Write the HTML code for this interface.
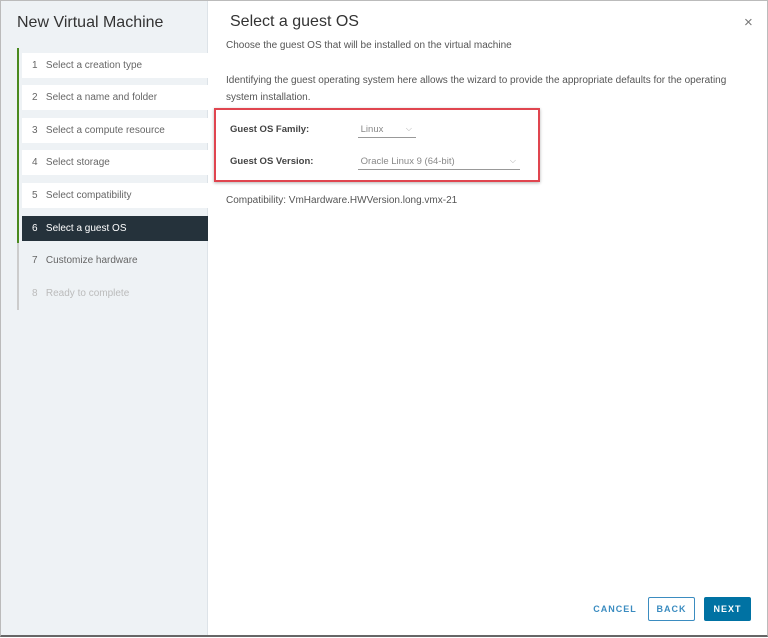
<!DOCTYPE html>
<html><head><meta charset="utf-8"><style>
*{margin:0;padding:0;box-sizing:border-box}
body{width:768px;height:638px;background:#fff;font-family:"Liberation Sans",sans-serif;position:relative;overflow:hidden}
.frame{position:absolute;left:0;top:0;width:768px;height:637px;border:1px solid #bbb;border-bottom:2px solid #666}
.left{position:absolute;left:1px;top:1px;width:207px;height:634px;background:#eef2f5;border-right:1px solid #dde3e8}
.title{position:absolute;left:17px;top:14px;font-size:16px;color:#333}
.bar{position:absolute;left:17px;top:48px;width:2px;height:195px;background:#4a8a1f}
.bar2{position:absolute;left:17px;top:243px;width:2px;height:67px;background:#ccc}
.step{position:absolute;left:22px;width:186px;height:25px;font-size:10px;color:#666;line-height:26px;padding-left:10px}
.step.w{background:#fff}
.step.a{background:#25323b;color:#fff}
.step.d{color:#bbb}
.r{position:absolute;font-size:10px;color:#555}
.h{position:absolute;left:230px;top:13px;font-size:16px;color:#333}
.box{position:absolute;left:214px;top:108px;width:326px;height:74px;border:2px solid #e0454f;box-shadow:0 1px 3px rgba(0,0,0,.3)}
.lbl{position:absolute;font-size:9.5px;font-weight:bold;color:#444}
.sel{position:absolute;border-bottom:1px solid #999;font-size:9.5px;color:#888;height:14px}
.chev{position:absolute;right:4px;top:0;font-size:8px;color:#aaa}
.btn{position:absolute;top:597px;height:24px;font-size:9px;font-weight:bold;letter-spacing:1px;text-align:center;line-height:24px}
</style></head><body>
<div class="frame"></div>
<div class="left"></div>
<div class="title">New Virtual Machine</div>
<div class="bar"></div><div class="bar2"></div>
<div class="step w" style="top:53px">1&nbsp;&nbsp;&nbsp;Select a creation type</div>
<div class="step w" style="top:85px">2&nbsp;&nbsp;&nbsp;Select a name and folder</div>
<div class="step w" style="top:118px">3&nbsp;&nbsp;&nbsp;Select a compute resource</div>
<div class="step w" style="top:150px">4&nbsp;&nbsp;&nbsp;Select storage</div>
<div class="step w" style="top:183px">5&nbsp;&nbsp;&nbsp;Select compatibility</div>
<div class="step a" style="top:216px">6&nbsp;&nbsp;&nbsp;Select a guest OS</div>
<div class="step" style="top:248px">7&nbsp;&nbsp;&nbsp;Customize hardware</div>
<div class="step d" style="top:281px">8&nbsp;&nbsp;&nbsp;Ready to complete</div>
<div class="h">Select a guest OS</div>
<div class="r" style="left:744px;top:14px;font-size:15px;color:#777">×</div>
<div class="r" style="left:226px;top:40px">Choose the guest OS that will be installed on the virtual machine</div>
<div class="r" style="left:226px;top:72px;width:530px;line-height:17px">Identifying the guest operating system here allows the wizard to provide the appropriate defaults for the operating system installation.</div>
<div class="box"></div>
<div class="lbl" style="left:230px;top:124px">Guest OS Family:</div>
<div class="lbl" style="left:230px;top:156px">Guest OS Version:</div>
<div class="sel" style="left:358px;top:124px;width:58px">&nbsp;Linux<span class="chev">⌵</span></div>
<div class="sel" style="left:358px;top:156px;width:162px">&nbsp;Oracle Linux 9 (64-bit)<span class="chev">⌵</span></div>
<div class="r" style="left:226px;top:195px">Compatibility: VmHardware.HWVersion.long.vmx-21</div>
<div class="btn" style="left:592px;width:46px;color:#3b8cc0">CANCEL</div>
<div class="btn" style="left:648px;width:47px;border:1px solid #3b8cc0;border-radius:2px;color:#3b8cc0;line-height:22px">BACK</div>
<div class="btn" style="left:704px;width:47px;background:#0072a3;border-radius:2px;color:#fff">NEXT</div>
</body></html>
